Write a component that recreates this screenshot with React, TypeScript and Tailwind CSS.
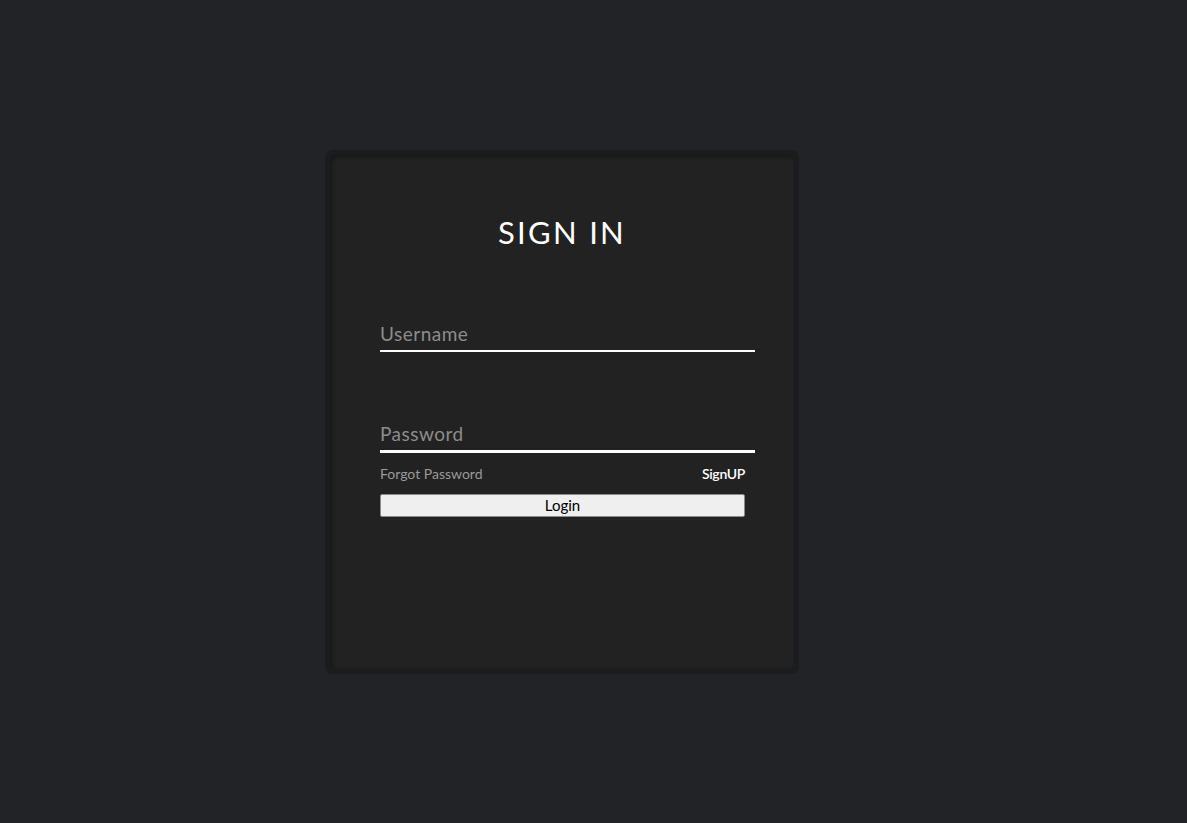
import React from "react";

export default function App() {
  return (
    <div
      className="w-full h-[823px] bg-[#222327] flex items-center"
      style={{ fontFamily: "Lato, 'Open Sans', sans-serif" }}
    >
      <div className="ml-[325px] w-[474px] h-[524px] rounded-[8px] bg-[#1b1c1e] p-[5px]">
        <div className="w-full h-full rounded-[6px] bg-[#222222] shadow-[inset_2px_2px_4px_rgba(0,0,0,0.35)] flex flex-col pl-[50px] pr-[39px]">
          <h1 className="mt-[59px] pr-[11px] text-center text-white text-[31px] leading-[36px] tracking-[2.3px] font-normal">
            SIGN IN
          </h1>
          <div className="mt-[70px] flex flex-col">
            <input
              placeholder="Username"
              className="w-[375px] h-[32px] bg-transparent border-0 border-b-2 border-white text-[19px] text-white placeholder:text-[#8c8c8c] outline-none tracking-[0.5px] pb-[2px]"
            />
            <input
              type="password"
              placeholder="Password"
              className="mt-[68px] w-[375px] h-[33px] bg-transparent border-0 border-b-[3px] border-white text-[19px] text-white placeholder:text-[#8c8c8c] outline-none tracking-[0.5px] pb-[2px]"
            />
            <div className="mt-[12px] w-[365px] flex justify-between items-center text-[14px] leading-[18px]">
              <span className="text-[#9a9a9a]">Forgot Password</span>
              <span className="text-white font-semibold tracking-[-0.3px]">SignUP</span>
            </div>
            <button className="mt-[11px] w-[365px] h-[23px] bg-[#efefef] border border-[#8a8a8a] rounded-[2px] text-black text-[15px] leading-[20px]">
              Login
            </button>
          </div>
        </div>
      </div>
    </div>
  );
}
